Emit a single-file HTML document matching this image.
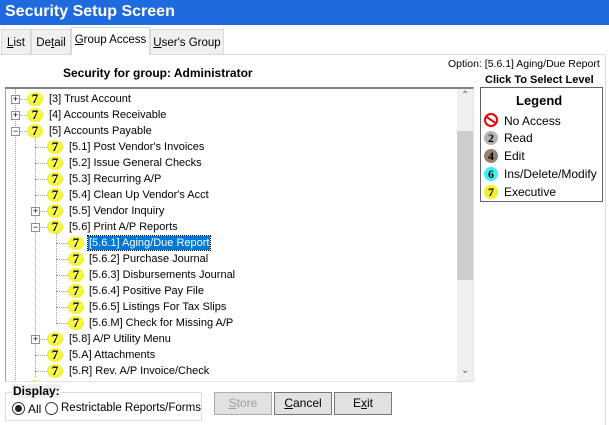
<!DOCTYPE html>
<html><head><style>
*{margin:0;padding:0;box-sizing:border-box}
body{width:609px;height:425px;background:#fff;font-family:"Liberation Sans",Arial,sans-serif;font-size:12px;color:#000;position:relative;overflow:hidden}
.a{position:absolute}
.title{left:0;top:0;width:609px;height:25px;background:#1f6ade;color:#fff;font-weight:bold;font-size:16px;padding:3px 0 0 5px}
.tab{position:absolute;background:#f0f0f0;border:1px solid #d9d9d9;border-bottom:none;font-size:11.5px;padding-top:7px;text-align:center;white-space:nowrap}
.y{position:absolute;width:16px;height:14px;border-radius:50%;background:radial-gradient(circle at 50% 45%,#ffff70 0%,#f2f226 70%,#e0e020 100%);font-family:"Liberation Serif",serif;font-weight:bold;font-size:13px;text-align:center;line-height:14px}
.t{position:absolute;font-size:11px;white-space:nowrap;line-height:14px}
.box{position:absolute;width:9px;height:9px;border:1px solid #919191;background:#fff;font-size:9px;line-height:7px;text-align:center;color:#000}
.hd{position:absolute;border-top:1px dotted #a0a0a0;height:0}
.vd{position:absolute;border-left:1px dotted #a0a0a0;width:0}
.btn{position:absolute;top:392px;height:23px;width:58px;border:1px solid #7a7a7a;background:#e1e1e1;text-align:center;line-height:21px;font-size:12px}
.lg{position:absolute;left:490px;font-size:12px}
.ci{position:absolute;left:484px;width:14px;height:14px;border-radius:50%;font-family:"Liberation Serif",serif;font-weight:bold;font-size:12px;text-align:center;line-height:14px}
</style></head><body>
<div class="a title">Security Setup Screen</div>
<div class="tab" style="left:1px;top:29px;width:30px;height:25px"><u>L</u>ist</div>
<div class="tab" style="left:31px;top:29px;width:40px;height:25px">De<u>t</u>ail</div>
<div class="tab" style="left:71px;top:27px;width:79px;height:28px;background:#fff;padding-top:6px;z-index:2"><u>G</u>roup Access</div>
<div class="tab" style="left:150px;top:29px;width:74px;height:25px"><u>U</u>ser's Group</div>
<div class="a" style="left:0;top:54px;width:606px;height:371px;border-top:1px solid #d9d9d9;border-right:1px solid #d9d9d9"></div>
<div class="a" style="left:63px;top:66px;font-weight:bold;font-size:12px">Security for group: Administrator</div>
<div class="a" style="left:448px;top:58px;font-size:10.5px">Option: [5.6.1] Aging/Due Report</div>
<div class="a" style="left:485px;top:74px;font-size:11px;font-weight:bold">Click To Select Level</div>
<div class="a" style="left:480px;top:87px;width:123px;height:115px;border:1px solid #646464"></div>
<div class="a" style="left:516px;top:93px;font-weight:bold;font-size:13px">Legend</div>
<div class="ci" style="top:113px;border:2px solid #e00;"><div style="position:absolute;left:0;top:4px;width:10px;height:2px;background:#e00;transform:rotate(35deg)"></div></div>
<div class="lg" style="left:504px;top:114px">No Access</div>
<div class="ci" style="top:131px;background:#b4b4b4">2</div><div class="lg" style="left:504px;top:131px">Read</div>
<div class="ci" style="top:149px;background:#9a7f70">4</div><div class="lg" style="left:504px;top:149px">Edit</div>
<div class="ci" style="top:167px;background:#3ef0f0">6</div><div class="lg" style="left:504px;top:167px">Ins/Delete/Modify</div>
<div class="ci" style="top:185px;background:#f2f226">7</div><div class="lg" style="left:504px;top:185px">Executive</div>
<div class="a" style="left:5px;top:87px;width:469px;height:295px;border-top:2px solid #828282;border-left:1px solid #a0a0a0;border-bottom:1px solid #e3e3e3;border-right:1px solid #e3e3e3;overflow:hidden">
<div class="vd" style="left:9px;top:0;height:295px"></div>
<div class="vd" style="left:29px;top:48px;height:240px"></div>
<div class="vd" style="left:50px;top:144px;height:90px"></div>
<div id="tree"></div>
<div class="a" style="left:451px;top:0;width:17px;height:293px;background:#f0f0f0"></div>
<div class="a" style="left:451px;top:42px;width:16px;height:149px;background:#cdcdcd"></div>
<div class="a" style="left:455px;top:1px;font-size:10px;color:#606060">&#8963;</div>
<div class="a" style="left:455px;top:276px;font-size:10px;color:#606060">&#8964;</div>
</div>
<script>
var rows=[[0,'+','[3] Trust Account'],[0,'+','[4] Accounts Receivable'],[0,'-','[5] Accounts Payable'],
[1,'','[5.1] Post Vendor\'s Invoices'],[1,'','[5.2] Issue General Checks'],[1,'','[5.3] Recurring A/P'],[1,'','[5.4] Clean Up Vendor\'s Acct'],[1,'+','[5.5] Vendor Inquiry'],[1,'-','[5.6] Print A/P Reports'],
[2,'','[5.6.1] Aging/Due Report'],[2,'','[5.6.2] Purchase Journal'],[2,'','[5.6.3] Disbursements Journal'],[2,'','[5.6.4] Positive Pay File'],[2,'','[5.6.5] Listings For Tax Slips'],[2,'','[5.6.M] Check for Missing A/P'],
[1,'+','[5.8] A/P Utility Menu'],[1,'','[5.A] Attachments'],[1,'','[5.R] Rev. A/P Invoice/Check'],[0,'','']];
var h='';
rows.forEach(function(r,i){var yc=10+16*i,L=r[0];
var bx=L==0?9:(L==1?29:50);
var ix=L==0?21:(L==1?41:62);
var tx=L==0?43:(L==1?63:83);
h+='<div class="hd" style="left:'+bx+'px;top:'+yc+'px;width:'+(ix-bx)+'px"></div>';
if(r[1])h+='<div class="box" style="left:'+(bx-4)+'px;top:'+(yc-4)+'px">'+(r[1]=='+'?'+':'&minus;')+'</div>';
h+='<div class="y" style="left:'+ix+'px;top:'+(yc-7)+'px">7</div>';
if(r[2]){var sel=i==9;h+='<div class="t" style="left:'+(tx-1)+'px;top:'+(yc-7)+'px;padding:0 1px;'+(sel?'background:#0078d7;color:#fff;outline:1px dotted #000;':'')+'">'+r[2]+'</div>';}
});
document.getElementById('tree').innerHTML=h;
</script>
<div class="a" style="left:5px;top:392px;width:197px;height:29px;border:1px solid #dcdcdc"></div>
<div class="a" style="left:12px;top:384px;background:#f0f0f0;font-weight:bold;font-size:12px;padding:0 1px">Display:</div>
<div class="a" style="left:12px;top:402px;width:13px;height:13px;border:1px solid #333;border-radius:50%;background:#fff"><div style="position:absolute;left:2px;top:2px;width:7px;height:7px;border-radius:50%;background:#222"></div></div>
<div class="a" style="left:28px;top:402px">All</div>
<div class="a" style="left:45px;top:402px;width:13px;height:13px;border:1px solid #333;border-radius:50%;background:#fff"></div>
<div class="a" style="left:61px;top:402px;font-size:11.5px">Restrictable Reports/Forms</div>
<div class="btn" style="left:214px;color:#a0a0a0;border-color:#adadad"><u>S</u>tore</div>
<div class="btn" style="left:274px"><u>C</u>ancel</div>
<div class="btn" style="left:334px">E<u>x</u>it</div>
</body></html>
